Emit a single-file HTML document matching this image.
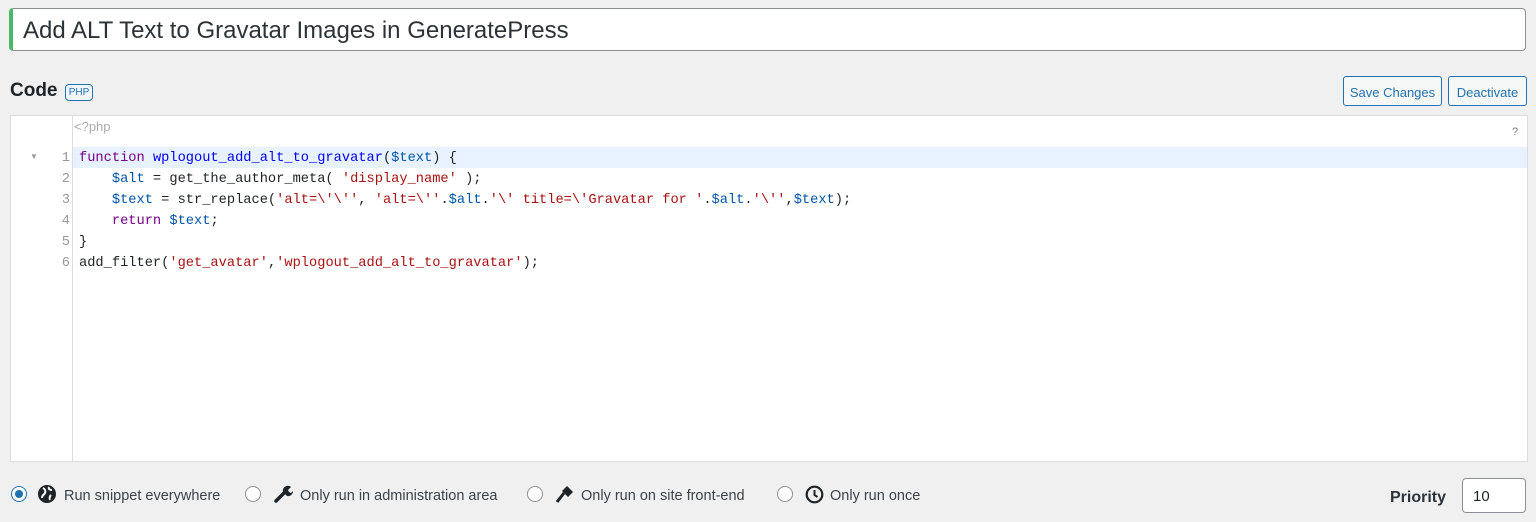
<!DOCTYPE html>
<html><head><style>
body{margin:0;width:1536px;height:522px;background:#f0f0f1;font-family:"Liberation Sans",sans-serif;position:relative;overflow:hidden;color:#1d2327}
.abs{position:absolute}
#title{left:9px;top:8px;background:#fff;border:1px solid #8c8f94;border-left:4px solid #4ab866;border-radius:4px;font-size:24px;line-height:44px;padding-left:10px;box-sizing:border-box;width:1517px;height:43px;color:#2c3338}
.btn{top:76px;height:30px;border:1px solid #2271b1;border-radius:3px;background:#f6f7f7;color:#2271b1;font-size:13px;line-height:32px;text-align:center;box-sizing:border-box}
#ed{left:10px;top:115px;width:1518px;height:347px;background:#fff;border:1px solid #dcdcde;box-sizing:border-box}
#gut{left:11px;top:116px;width:62px;height:345px;background:#fff;border-right:1px solid #ddd;box-sizing:border-box}
.ln{font-family:"Liberation Mono",monospace;font-size:13.7px;line-height:21px;white-space:pre}
.k{color:#708}.v{color:#05a}.s{color:#a11}.d{color:#00f}
.num{left:40px;width:30px;text-align:right;color:#999}
.r{top:486px;width:16px;height:16px;border:1px solid #8c8f94;border-radius:50%;background:#fff;box-sizing:border-box}
.lbl{top:487px;font-size:14.5px;color:#3c434a;line-height:18px}
</style></head><body>
<div id="title" class="abs">Add ALT Text to Gravatar Images in GeneratePress</div>
<div class="abs" style="left:10px;top:80px;font-size:19px;font-weight:bold;color:#1d2327">Code</div>
<div class="abs" style="left:65px;top:84px;width:26px;height:15px;border:1px solid #2271b1;border-radius:4px;font-size:10px;line-height:15px;text-align:center;color:#2271b1;background:#f0f6fc">PHP</div>
<div class="abs btn" style="left:1343px;width:99px">Save Changes</div>
<div class="abs btn" style="left:1448px;width:79px">Deactivate</div>
<div id="ed" class="abs"></div>
<div id="gut" class="abs"></div>
<div class="abs" style="left:73px;top:147px;width:1454px;height:21px;background:#e8f2fe"></div>
<div class="abs ln" style="left:74px;top:116px;color:#aaa;font-family:'Liberation Sans',sans-serif;font-size:13px">&lt;?php</div>
<div class="abs" style="left:1512px;top:126px;font-size:11px;color:#777">?</div>
<div class="abs" style="left:30px;top:152px;font-size:8px;color:#999">▼</div>
<div class="abs ln num" style="top:148px">1
2
3
4
5
6</div>
<div class="abs ln" style="left:79px;top:148px"><span class="k">function</span> <span class="d">wplogout_add_alt_to_gravatar</span>(<span class="v">$text</span>) {
    <span class="v">$alt</span> = get_the_author_meta( <span class="s">'display_name'</span> );
    <span class="v">$text</span> = str_replace(<span class="s">'alt=\'\''</span>, <span class="s">'alt=\''</span>.<span class="v">$alt</span>.<span class="s">'\' title=\'Gravatar for '</span>.<span class="v">$alt</span>.<span class="s">'\''</span>,<span class="v">$text</span>);
    <span class="k">return</span> <span class="v">$text</span>;
}
add_filter(<span class="s">'get_avatar'</span>,<span class="s">'wplogout_add_alt_to_gravatar'</span>);</div>

<div class="abs r" style="left:11px;border-color:#2271b1"><div style="width:8px;height:8px;border-radius:50%;background:#2271b1;margin:3px"></div></div>
<svg class="abs" style="left:37px;top:484px" width="20" height="20" viewBox="0 0 20 20"><circle cx="10" cy="10" r="9" fill="#1d2327"/><path d="M6 4c2 1 3 3 2 5s-3 2-3 5M12 3c-1 2 1 3 3 3M14 11c-1 1-2 3-1 5" stroke="#fff" stroke-width="2" fill="none"/></svg>
<div class="abs lbl" style="left:64px">Run snippet everywhere</div>
<div class="abs r" style="left:245px"></div>
<svg class="abs" style="left:273px;top:485px" width="20" height="18" viewBox="0 0 20 18"><path d="M3 16L11 8" stroke="#1d2327" stroke-width="3.5" stroke-linecap="round"/><path d="M10 7a5 5 0 0 1 8-5l-3 3 1 2 2 1 2-2a5 5 0 0 1-6 5z" fill="#1d2327"/></svg>
<div class="abs lbl" style="left:300px">Only run in administration area</div>
<div class="abs r" style="left:527px"></div>
<svg class="abs" style="left:555px;top:485px" width="20" height="18" viewBox="0 0 20 18"><path d="M2 17L9 8" stroke="#1d2327" stroke-width="3"/><path d="M7 6l5-5 6 6-5 5z" fill="#1d2327"/></svg>
<div class="abs lbl" style="left:581px">Only run on site front-end</div>
<div class="abs r" style="left:777px"></div>
<svg class="abs" style="left:805px;top:485px" width="19" height="19" viewBox="0 0 19 19"><circle cx="9.5" cy="9.5" r="7.8" stroke="#1d2327" stroke-width="2.2" fill="none"/><path d="M9.5 5v5l3 2" stroke="#1d2327" stroke-width="2" fill="none"/></svg>
<div class="abs lbl" style="left:830px">Only run once</div>
<div class="abs" style="left:1390px;top:489px;font-size:16px;font-weight:bold;color:#2c3338">Priority</div>
<div class="abs" style="left:1462px;top:478px;width:64px;height:35px;background:#fff;border:1px solid #8c8f94;border-radius:4px;box-sizing:border-box;font-size:15px;line-height:35px;padding-left:10px">10</div>
</body></html>
